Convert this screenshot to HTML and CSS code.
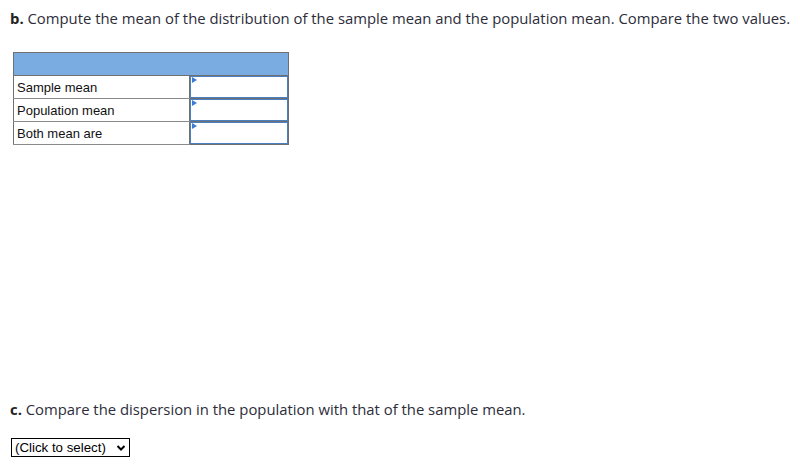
FILE: index.html
```html
<!DOCTYPE html>
<html>
<head>
<meta charset="utf-8">
<link rel="stylesheet" href="styles.css">
</head>
<body>
<div class="page">
  <p class="q"><b>b.</b> Compute the mean of the distribution of the sample mean and the population mean. Compare the two values.</p>
  <table class="grid">
    <tr class="head"><td colspan="2"></td></tr>
    <tr><td class="lab">Sample mean</td><td class="inp"><span class="tri"></span></td></tr>
    <tr><td class="lab">Population mean</td><td class="inp"><span class="tri"></span></td></tr>
    <tr><td class="lab">Both mean are</td><td class="inp"><span class="tri"></span></td></tr>
  </table>
  <p class="q q2"><b>c.</b> Compare the dispersion in the population with that of the sample mean.</p>
  <div class="sel"><span>(Click to select)</span><svg width="10" height="8" viewBox="0 0 10 8"><path d="M1.5 2 L5 5.5 L8.5 2" fill="none" stroke="#000" stroke-width="2"/></svg></div>
</div>
</body>
</html>
```
FILE: styles.css
```css
html, body { margin: 0; padding: 0; background: #fff; }
.page { padding: 0 0 0 10px; }
.q {
  margin: 0;
  padding-top: 9px;
  font-family: "Open Sans", sans-serif;
  font-size: 14.85px;
  line-height: 19px;
  color: #2d2d3a;
  white-space: nowrap;
}
.q b { font-weight: 700; color: #222; }
.grid {
  margin: 24px 0 0 3px;
  border-collapse: collapse;
  border: 1px solid #6f6f6f;
  font-family: "Liberation Sans", Arial, sans-serif;
  font-size: 13px;
  color: #111;
}
.grid td { padding: 0; }
.head td { background: #7aace2; height: 22px; border-bottom: 1px solid #6f6f6f; }
.lab { width: 172px; height: 22px; padding-left: 3px !important; border-bottom: 1px solid #8a8a8a; border-right: 1px solid #6f6f6f; }
.inp { width: 98px; height: 20px; border: 1px solid #6f6f6f; position: relative; box-shadow: inset 0 0 0 1px #4a7fc1; }
.tri {
  position: absolute; left: 2px; top: 1px;
  width: 0; height: 0;
  border-top: 3px solid transparent; border-bottom: 3px solid transparent;
  border-left: 5px solid #3d7bd0;
}
.q2 { padding-top: 0; margin-top: 255px; }
.sel {
  margin: 19px 0 0 1px;
  display: inline-flex; align-items: center; gap: 10px;
  border: 1px solid #000;
  height: 17px;
  padding: 0 3px 0 3px;
  font-family: "Liberation Sans", Arial, sans-serif;
  font-size: 13.3px;
  color: #000;
}
```
